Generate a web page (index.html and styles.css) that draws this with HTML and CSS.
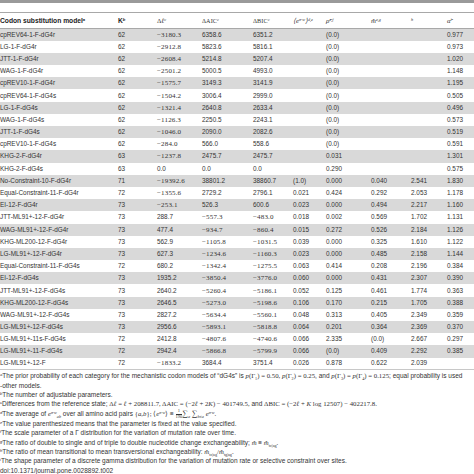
FILE: index.html
```html
<!DOCTYPE html>
<html>
<head>
<meta charset="utf-8">
<link rel="stylesheet" href="styles.css">
</head>
<body>
<div class="page">
  <div class="topband"></div>
  <table class="tbl">
    <colgroup>
      <col class="c1"><col class="c2"><col class="c3"><col class="c4"><col class="c5">
      <col class="c6"><col class="c7"><col class="c8"><col class="c9"><col class="c10">
    </colgroup>
    <thead>
      <tr>
        <th class="lbl">Codon substitution model<sup>a</sup></th>
        <th class="lbl">K<sup>b</sup></th>
        <th class="mth">Δ<i>ℓ</i><sup>c</sup></th>
        <th class="mth sc">ΔAIC<sup>c</sup></th>
        <th class="mth sc">ΔBIC<sup>c</sup></th>
        <th class="mth"><i>⟨e<sup>σ·w</sup>⟩</i><sup>d,e</sup></th>
        <th class="mth"><i>ρ̂</i><sup>e,f</sup></th>
        <th class="mth"><i>m̂</i><sup>e,g</sup></th>
        <th class="mth"><sup>h</sup></th>
        <th class="mth"><i>α̂</i><sup>i</sup></th>
      </tr>
    </thead>
    <tbody>
      <tr><td>cpREV64-1-F-dG4r</td><td>62</td><td class="neg">−3180.3</td><td>6358.6</td><td>6351.2</td><td></td><td>(0.0)</td><td></td><td></td><td>0.977</td></tr>
      <tr><td>LG-1-F-dG4r</td><td>62</td><td class="neg">−2912.8</td><td>5823.6</td><td>5816.1</td><td></td><td>(0.0)</td><td></td><td></td><td>0.973</td></tr>
      <tr><td>JTT-1-F-dG4r</td><td>62</td><td class="neg">−2608.4</td><td>5214.8</td><td>5207.4</td><td></td><td>(0.0)</td><td></td><td></td><td>1.020</td></tr>
      <tr><td>WAG-1-F-dG4r</td><td>62</td><td class="neg">−2501.2</td><td>5000.5</td><td>4993.0</td><td></td><td>(0.0)</td><td></td><td></td><td>1.148</td></tr>
      <tr><td>cpREV10-1-F-dG4r</td><td>62</td><td class="neg">−1575.7</td><td>3149.3</td><td>3141.9</td><td></td><td>(0.0)</td><td></td><td></td><td>1.195</td></tr>
      <tr><td>cpREV64-1-F-dG4s</td><td>62</td><td class="neg">−1504.2</td><td>3006.4</td><td>2999.0</td><td></td><td>(0.0)</td><td></td><td></td><td>0.505</td></tr>
      <tr><td>LG-1-F-dG4s</td><td>62</td><td class="neg">−1321.4</td><td>2640.8</td><td>2633.4</td><td></td><td>(0.0)</td><td></td><td></td><td>0.496</td></tr>
      <tr><td>WAG-1-F-dG4s</td><td>62</td><td class="neg">−1126.3</td><td>2250.5</td><td>2243.1</td><td></td><td>(0.0)</td><td></td><td></td><td>0.573</td></tr>
      <tr><td>JTT-1-F-dG4s</td><td>62</td><td class="neg">−1046.0</td><td>2090.0</td><td>2082.6</td><td></td><td>(0.0)</td><td></td><td></td><td>0.519</td></tr>
      <tr><td>cpREV10-1-F-dG4s</td><td>62</td><td class="neg">−284.0</td><td>566.0</td><td>558.6</td><td></td><td>(0.0)</td><td></td><td></td><td>0.591</td></tr>
      <tr><td>KHG-2-F-dG4r</td><td>63</td><td class="neg">−1237.8</td><td>2475.7</td><td>2475.7</td><td></td><td>0.031</td><td></td><td></td><td>1.301</td></tr>
      <tr><td>KHG-2-F-dG4s</td><td>63</td><td>0.0</td><td>0.0</td><td>0.0</td><td></td><td>0.290</td><td></td><td></td><td>0.575</td></tr>
      <tr><td>No-Constraint-10-F-dG4r</td><td>71</td><td class="neg">−19392.6</td><td>38801.2</td><td>38860.7</td><td>(1.0)</td><td>0.000</td><td>0.040</td><td>2.541</td><td>1.830</td></tr>
      <tr><td>Equal-Constraint-11-F-dG4r</td><td>72</td><td class="neg">−1355.6</td><td>2729.2</td><td>2796.1</td><td>0.021</td><td>0.424</td><td>0.292</td><td>2.053</td><td>1.178</td></tr>
      <tr><td>EI-12-F-dG4r</td><td>73</td><td class="neg">−253.1</td><td>526.3</td><td>600.6</td><td>0.023</td><td>0.000</td><td>0.494</td><td>2.217</td><td>1.160</td></tr>
      <tr><td>JTT-ML91+-12-F-dG4r</td><td>73</td><td>288.7</td><td class="neg">−557.3</td><td class="neg">−483.0</td><td>0.018</td><td>0.002</td><td>0.569</td><td>1.702</td><td>1.131</td></tr>
      <tr><td>WAG-ML91+-12-F-dG4r</td><td>73</td><td>477.4</td><td class="neg">−934.7</td><td class="neg">−860.4</td><td>0.015</td><td>0.272</td><td>0.526</td><td>2.184</td><td>1.126</td></tr>
      <tr><td>KHG-ML200-12-F-dG4r</td><td>73</td><td>562.9</td><td class="neg">−1105.8</td><td class="neg">−1031.5</td><td>0.039</td><td>0.000</td><td>0.325</td><td>1.610</td><td>1.122</td></tr>
      <tr><td>LG-ML91+-12-F-dG4r</td><td>73</td><td>627.3</td><td class="neg">−1234.6</td><td class="neg">−1160.3</td><td>0.023</td><td>0.000</td><td>0.485</td><td>2.158</td><td>1.144</td></tr>
      <tr><td>Equal-Constraint-11-F-dG4s</td><td>72</td><td>680.2</td><td class="neg">−1342.4</td><td class="neg">−1275.5</td><td>0.063</td><td>0.414</td><td>0.208</td><td>2.196</td><td>0.384</td></tr>
      <tr><td>EI-12-F-dG4s</td><td>73</td><td>1935.2</td><td class="neg">−3850.4</td><td class="neg">−3776.0</td><td>0.060</td><td>0.000</td><td>0.431</td><td>2.307</td><td>0.390</td></tr>
      <tr><td>JTT-ML91+-12-F-dG4s</td><td>73</td><td>2640.2</td><td class="neg">−5260.4</td><td class="neg">−5186.1</td><td>0.052</td><td>0.125</td><td>0.461</td><td>1.774</td><td>0.363</td></tr>
      <tr><td>KHG-ML200-12-F-dG4s</td><td>73</td><td>2646.5</td><td class="neg">−5273.0</td><td class="neg">−5198.6</td><td>0.106</td><td>0.170</td><td>0.215</td><td>1.705</td><td>0.388</td></tr>
      <tr><td>WAG-ML91+-12-F-dG4s</td><td>73</td><td>2827.2</td><td class="neg">−5634.4</td><td class="neg">−5560.1</td><td>0.048</td><td>0.313</td><td>0.405</td><td>2.349</td><td>0.359</td></tr>
      <tr><td>LG-ML91+-12-F-dG4s</td><td>73</td><td>2956.6</td><td class="neg">−5893.1</td><td class="neg">−5818.8</td><td>0.064</td><td>0.201</td><td>0.364</td><td>2.369</td><td>0.370</td></tr>
      <tr><td>LG-ML91+-11s-F-dG4s</td><td>72</td><td>2412.8</td><td class="neg">−4807.6</td><td class="neg">−4740.6</td><td>0.066</td><td>2.335</td><td>(0.0)</td><td>2.667</td><td>0.297</td></tr>
      <tr><td>LG-ML91+-11-F-dG4s</td><td>72</td><td>2942.4</td><td class="neg">−5866.8</td><td class="neg">−5799.9</td><td>0.066</td><td>(0.0)</td><td>0.409</td><td>2.292</td><td>0.385</td></tr>
      <tr><td>LG-ML91+-12-F</td><td>72</td><td class="neg">−1833.2</td><td>3684.4</td><td>3751.4</td><td>0.026</td><td>0.878</td><td>0.622</td><td>2.039</td><td></td></tr>
    </tbody>
  </table>
  <div class="notes">
    <div class="note"><sup>a</sup>The prior probability of each category for the mechanistic codon models of “dG4s” is <span class="mx"><i>p</i>(Γ<sub>1</sub>) = 0.50, <i>p</i>(Γ<sub>2</sub>) = 0.25</span>, and <span class="mx"><i>p</i>(Γ<sub>3</sub>) = <i>p</i>(Γ<sub>4</sub>) = 0.125</span>; equal probability is used</div>
    <div class="note">-other models.</div>
    <div class="note"><sup>b</sup>The number of adjustable parameters.</div>
    <div class="note"><sup>c</sup>Differences from the reference state; <span class="mx">Δ<i>ℓ</i> = <i>ℓ</i> + 208811.7, ΔAIC = (−2<i>ℓ</i> + 2<i>K</i>) − 401749.5,</span> and <span class="mx">ΔBIC = (−2<i>ℓ</i> + <i>K</i> log 12507) − 402217.8.</span></div>
    <div class="note tall"><sup>d</sup>The average of <span class="mx"><i>e<sup>σ·w</sup><sub>ab</sub></i></span> over all amino acid pairs <span class="mx">{<i>a,b</i>}; ⟨<i>e<sup>σ·w</sup></i>⟩ ≡ <span class="frac"><span>1</span><span>190</span></span><span class="big">∑</span><sub><i>a</i></sub> <span class="big">∑</span><sub><i>b</i>≠<i>a</i></sub> <i>e<sup>σ·w</sup></i>.</span></div>
    <div class="note"><sup>e</sup>The value parenthesized means that the parameter is fixed at the value specified.</div>
    <div class="note"><sup>f</sup>The scale parameter of a Γ distribution for the variation of mutation rate over time.</div>
    <div class="note"><sup>g</sup>The ratio of double to single and of triple to double nucleotide change exchangeability; <span class="mx"><i>m̂</i> ≡ <i>m̂</i><sub>tc|ag</sub>.</span></div>
    <div class="note"><sup>h</sup>The ratio of mean transitional to mean transversional exchangeability: <span class="mx"><i>m̂</i><sub>tc|ag</sub>/<i>m̂</i><sub>tg|ag</sub>.</span></div>
    <div class="note"><sup>i</sup>The shape parameter of a discrete gamma distribution for the variation of mutation rate or selective constraint over sites.</div>
    <div class="note">doi:10.1371/journal.pone.0028892.t002</div>
  </div>
</div>
</body>
</html>
```
FILE: styles.css
```css
html, body {
  margin: 0;
  padding: 0;
  background: #fff;
  overflow: hidden;
}
.page {
  width: 474px;
  height: 474px;
  overflow: hidden;
  color: #333;
  font-family: "Liberation Sans", Arial, sans-serif;
}
.topband {
  height: 3px;
  background: #9a9a9a;
  margin-bottom: 9px;
}
.tbl {
  width: 480px;
  table-layout: fixed;
  border-collapse: collapse;
  font-size: 6.4px;
}
.c1 { width: 116px; }
.c2 { width: 39px; }
.c3 { width: 45px; }
.c4 { width: 51px; }
.c5 { width: 40px; }
.c6 { width: 33px; }
.c7 { width: 45px; }
.c8 { width: 40px; }
.c9 { width: 36px; }
.c10 { width: 35px; }
.tbl thead tr {
  height: 16px;
  border-top: 1px solid #a8a8a8;
  border-bottom: 1px solid #a8a8a8;
}
.tbl th {
  text-align: left;
  padding: 0 0 0 2px;
  white-space: nowrap;
  vertical-align: middle;
  font-weight: normal;
}
.tbl th:first-child,
.tbl td:first-child {
  padding-left: 0;
}
.tbl th.lbl {
  font-weight: bold;
  font-size: 6.7px;
  color: #222;
}
.tbl th.mth {
  font-family: "Liberation Serif", "Times New Roman", serif;
  font-size: 6.8px;
}
.tbl th.sc {
  font-size: 6.2px;
  letter-spacing: 0.1px;
}
.tbl sup {
  font-size: 4.2px;
  vertical-align: 2.5px;
  line-height: 0;
  font-style: italic;
}
.tbl tbody tr {
  height: 12.2px;
}
.tbl tbody tr:nth-child(odd) {
  background: #d9d9d9;
}
.tbl tbody tr:last-child {
  border-bottom: 1px solid #c8c8c8;
}
.tbl td {
  padding: 0 0 0 2px;
  white-space: nowrap;
  vertical-align: middle;
  line-height: 8px;
}
.tbl td.neg {
  font-family: "Liberation Serif", "Times New Roman", serif;
  font-size: 7px;
  letter-spacing: 0.15px;
}
.notes {
  padding-top: 1px;
  font-size: 6.5px;
  color: #333;
}
.note {
  white-space: nowrap;
  line-height: 9.4px;
  height: 9.4px;
}
.note.tall {
  height: 10px;
}
.note sup {
  font-size: 4.2px;
  vertical-align: 2.5px;
  line-height: 0;
  font-style: italic;
}
.note sub {
  font-size: 4.2px;
  vertical-align: -1.5px;
  line-height: 0;
}
.mx {
  font-family: "Liberation Serif", "Times New Roman", serif;
  font-size: 6.8px;
}
.frac {
  display: inline-flex;
  flex-direction: column;
  vertical-align: middle;
  font-size: 4.5px;
  line-height: 4.5px;
  text-align: center;
}
.frac span:first-child {
  border-bottom: 0.5px solid #333;
}
.big {
  font-size: 8px;
  line-height: 0;
}
```
